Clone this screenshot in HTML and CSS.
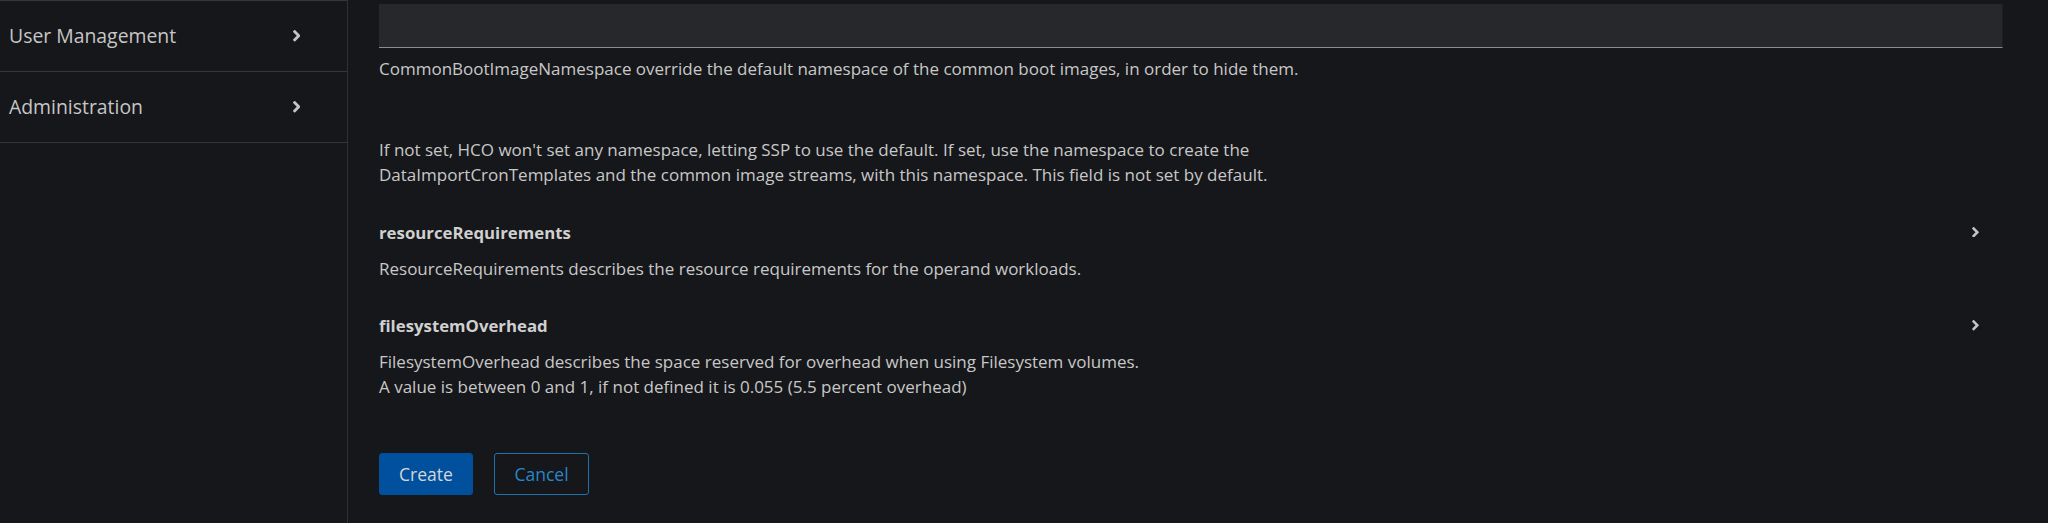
FILE: index.html
```html
<!DOCTYPE html>
<html lang="en">
<head>
<meta charset="utf-8">
<title>Create HyperConverged</title>
<link rel="stylesheet" href="styles.css">
</head>
<body>
<div class="page">
  <nav class="sidebar">
    <ul class="nav-list">
      <li class="nav-item">
        <span class="nav-label">User Management</span>
        <svg class="chev nav-chev" viewBox="24 96 208 320" aria-hidden="true"><path d="M224.3 273l-136 136c-9.4 9.4-24.6 9.4-33.9 0l-22.6-22.6c-9.4-9.4-9.4-24.6 0-33.9l96.4-96.4-96.4-96.4c-9.4-9.4-9.4-24.6 0-33.9L54.3 103c9.4-9.4 24.6-9.4 33.9 0l136 136c9.5 9.4 9.5 24.6.1 34z"/></svg>
      </li>
      <li class="nav-item">
        <span class="nav-label">Administration</span>
        <svg class="chev nav-chev" viewBox="24 96 208 320" aria-hidden="true"><path d="M224.3 273l-136 136c-9.4 9.4-24.6 9.4-33.9 0l-22.6-22.6c-9.4-9.4-9.4-24.6 0-33.9l96.4-96.4-96.4-96.4c-9.4-9.4-9.4-24.6 0-33.9L54.3 103c9.4-9.4 24.6-9.4 33.9 0l136 136c9.5 9.4 9.5 24.6.1 34z"/></svg>
      </li>
    </ul>
  </nav>
  <main class="content">
    <div class="field">
      <div class="text-input"></div>
      <p class="helper">CommonBootImageNamespace override the default namespace of the common boot images, in order to hide them.</p>
      <p class="desc desc-extra">If not set, HCO won't set any namespace, letting SSP to use the default. If set, use the namespace to create the<br>DataImportCronTemplates and the common image streams, with this namespace. This field is not set by default.</p>
    </div>
    <section class="group">
      <div class="group-head">
        <span class="group-title">resourceRequirements</span>
        <svg class="chev group-chev" viewBox="24 96 208 320" aria-hidden="true"><path d="M224.3 273l-136 136c-9.4 9.4-24.6 9.4-33.9 0l-22.6-22.6c-9.4-9.4-9.4-24.6 0-33.9l96.4-96.4-96.4-96.4c-9.4-9.4-9.4-24.6 0-33.9L54.3 103c9.4-9.4 24.6-9.4 33.9 0l136 136c9.5 9.4 9.5 24.6.1 34z"/></svg>
      </div>
      <p class="desc">ResourceRequirements describes the resource requirements for the operand workloads.</p>
    </section>
    <section class="group">
      <div class="group-head">
        <span class="group-title">filesystemOverhead</span>
        <svg class="chev group-chev" viewBox="24 96 208 320" aria-hidden="true"><path d="M224.3 273l-136 136c-9.4 9.4-24.6 9.4-33.9 0l-22.6-22.6c-9.4-9.4-9.4-24.6 0-33.9l96.4-96.4-96.4-96.4c-9.4-9.4-9.4-24.6 0-33.9L54.3 103c9.4-9.4 24.6-9.4 33.9 0l136 136c9.5 9.4 9.5 24.6.1 34z"/></svg>
      </div>
      <p class="desc">FilesystemOverhead describes the space reserved for overhead when using Filesystem volumes.<br>A value is between 0 and 1, if not defined it is 0.055 (5.5 percent overhead)</p>
    </section>
    <div class="actions">
      <button class="btn btn-primary" type="button">Create</button>
      <button class="btn btn-secondary" type="button">Cancel</button>
    </div>
  </main>
</div>
</body>
</html>
```

FILE: styles.css
```css
* {
  box-sizing: border-box;
}

html, body {
  margin: 0;
  padding: 0;
  background: #16171a;
  height: 100%;
  overflow: hidden;
}

body {
  font-family: "Open Sans", Lato, sans-serif;
  color: #c8c8c8;
  font-size: 17px;
  line-height: 25.2px;
}

.page {
  display: flex;
  height: 523px;
}

.sidebar {
  width: 348px;
  flex: 0 0 348px;
  border-right: 1px solid #2e3034;
  background: #16171a;
}

.nav-list {
  list-style: none;
  margin: 0;
  padding: 0;
  border-top: 1px solid #34363a;
}

.nav-item {
  display: flex;
  align-items: center;
  justify-content: space-between;
  height: 71px;
  padding: 0 47px 0 9px;
  border-bottom: 1px solid #34363a;
}

.nav-label {
  font-size: 19.4px;
  color: #c6c6c6;
}

.chev {
  fill: #c4c4c4;
  display: block;
}

.nav-chev {
  width: 7.5px;
  height: 11.5px;
}

.content {
  flex: 1;
  padding: 4px 45px 0 31px;
}

.field {
  display: flex;
  flex-direction: column;
}

.text-input {
  height: 44px;
  background: #27282b;
  border-bottom: 1px solid #8a8d90;
  border-right: 1px solid #1d1e21;
}

p {
  margin: 0;
}

.helper {
  margin-top: 8px;
}

.desc-extra {
  margin-top: 56px;
}

.group {
  margin-top: 32px;
}

.group-head {
  display: flex;
  align-items: center;
  justify-content: space-between;
  padding-right: 24px;
}

.group-title {
  font-weight: 700;
  font-size: 16.8px;
  color: #d0d0d0;
}

.group-chev {
  width: 7px;
  height: 10.5px;
}

.group .desc {
  margin-top: 11px;
}

.actions {
  display: flex;
  gap: 21px;
  margin-top: 53px;
}

.btn {
  font-family: "Open Sans", Lato, sans-serif;
  font-size: 17.5px;
  height: 42px;
  width: 94px;
  border-radius: 3px;
  padding: 0;
  cursor: pointer;
}

.btn-primary {
  background: #00509e;
  color: #d4d6d9;
  border: 1px solid #00509e;
}

.btn-secondary {
  width: 95px;
  background: transparent;
  color: #2a86c8;
  border: 1px solid #1f72b0;
}
```
